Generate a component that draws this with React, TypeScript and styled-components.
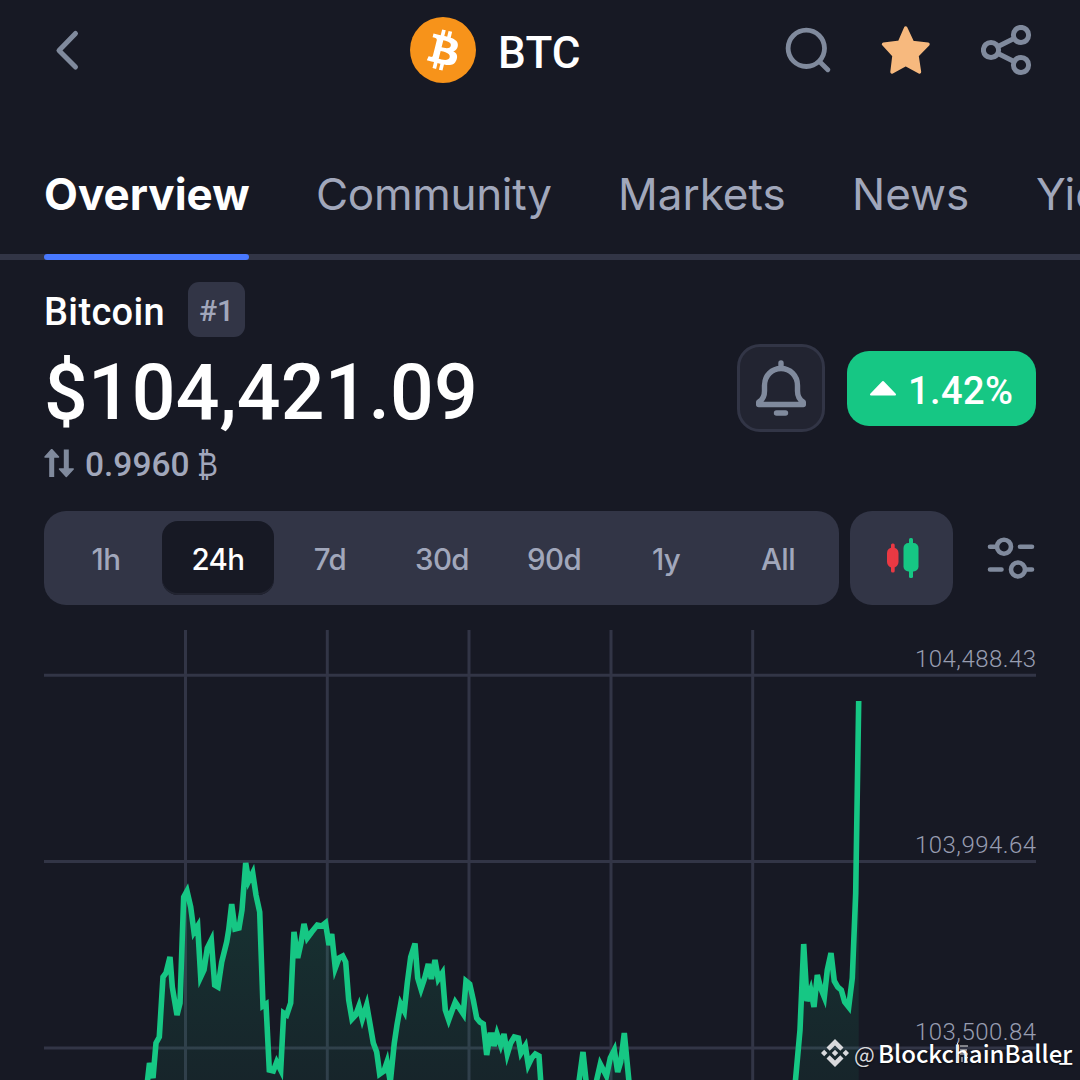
import React from "react";
import styled, { createGlobalStyle } from "styled-components";

const Global = createGlobalStyle`
  * { box-sizing: border-box; }
  html, body { margin: 0; padding: 0; background: #171924; overflow: hidden; }
  button { border: 0; background: none; padding: 0; margin: 0; font: inherit; color: inherit; }
  svg { display: block; }
`;

const Screen = styled.main`
  position: relative;
  width: 1080px;
  height: 1080px;
  overflow: hidden;
  display: flex;
  flex-direction: column;
  background: #171924;
  color: #fff;
  font-family: Roboto, "Liberation Sans", sans-serif;
`;

const Header = styled.header`
  height: 100px;
  flex: none;
  display: grid;
  grid-template-columns: 410px 1fr auto;
  align-items: center;
  padding-right: 48px;
`;

const BackButton = styled.button`
  justify-self: start;
  margin-left: 55px;
`;

const CoinTitle = styled.div`
  display: flex;
  align-items: center;
  gap: 22px;
  font-size: 44px;
  font-weight: 500;
  line-height: 52px;
`;

const Ticker = styled.span`
  padding-top: 6px;
  letter-spacing: 0.2px;
`;

const HeaderActions = styled.div`
  display: flex;
  align-items: center;
  gap: 50px;
`;

const Tabs = styled.nav`
  height: 160px;
  flex: none;
  display: flex;
  gap: 67px;
  padding-left: 44px;
  font-family: Inter, sans-serif;
  font-size: 44px;
  white-space: nowrap;
  box-shadow: inset 0 -6px #323546;
`;

const Tab = styled.button<{ $active?: boolean; $width: number; $spacing?: number }>`
  flex: none;
  width: ${(p) => p.$width}px;
  text-align: left;
  line-height: 54px;
  padding-top: 67px;
  padding-bottom: 32px;
  letter-spacing: ${(p) => p.$spacing ?? 0}px;
  color: ${(p) => (p.$active ? "#fff" : "#a1a7bb")};
  font-weight: ${(p) => (p.$active ? 700 : 400)};
  display: flex;
  flex-direction: column;
  justify-content: space-between;

  &::after {
    content: "";
    width: 100%;
    height: 6px;
    margin-bottom: -32px;
    border-radius: 3px;
    background: ${(p) => (p.$active ? "#4878ff" : "transparent")};
  }
`;

const Summary = styled.section`
  height: 251px;
  flex: none;
  display: flex;
  justify-content: space-between;
  padding: 22px 44px 0;
`;

const Quote = styled.div`
  display: flex;
  flex-direction: column;
`;

const NameRow = styled.div`
  display: flex;
  align-items: center;
  gap: 23px;
  height: 55px;
`;

const CoinName = styled.h1`
  margin: 0;
  padding-top: 4px;
  font-size: 38px;
  font-weight: 500;
  line-height: 46px;
  letter-spacing: 0.35px;
`;

const Rank = styled.span`
  width: 57px;
  height: 55px;
  border-radius: 11px;
  background: #323546;
  color: #a1a7bb;
  font-size: 30px;
  font-weight: 500;
  line-height: 57px;
  text-align: center;
`;

const Price = styled.div`
  margin-top: 10px;
  font-size: 77px;
  font-weight: 500;
  line-height: 92px;
  letter-spacing: 0.12px;
`;

const BtcRow = styled.div`
  display: flex;
  align-items: center;
  gap: 10px;
  margin-top: 4px;
  height: 40px;
  color: #a1a7bb;
  font-size: 33.5px;
  font-weight: 500;
  line-height: 42px;
`;

const BtcValue = styled.span`
  padding-top: 3px;
`;

const BtcSign = styled.span`
  display: inline-block;
  margin-left: -1px;
  font-weight: 400;
  transform: scaleX(0.84);
  transform-origin: left center;
`;

const QuoteActions = styled.div`
  display: flex;
  align-items: center;
  gap: 22px;
  height: 88px;
  margin-top: 62px;
`;

const AlertButton = styled.button`
  display: grid;
  place-items: center;
  width: 88px;
  height: 88px;
  border: 3px solid #323546;
  border-radius: 23px;
  background: #222431;
`;

const Change = styled.div`
  display: flex;
  align-items: center;
  gap: 11px;
  width: 189px;
  height: 75px;
  padding-left: 22px;
  border-radius: 22px;
  background: #16c784;
  font-size: 38px;
  font-weight: 500;
  line-height: 46px;
`;

const ChangeText = styled.span`
  padding-top: 5px;
  letter-spacing: 0.4px;
`;

const Controls = styled.section`
  flex: none;
  display: flex;
  align-items: center;
  padding: 0 45px 0 44px;
  height: 94px;
`;

const RangeGroup = styled.div`
  display: grid;
  grid-template-columns: repeat(7, 112px);
  align-items: start;
  padding: 10px 5px 0 6px;
  width: 795px;
  height: 94px;
  border-radius: 22px;
  background: #323546;
`;

const Range = styled.button<{ $active?: boolean }>`
  height: 74px;
  padding-top: 1px;
  border-radius: 16px;
  text-align: center;
  font-family: Inter, sans-serif;
  font-size: 29.5px;
  font-weight: 450;
  letter-spacing: -0.6px;
  color: ${(p) => (p.$active ? "#fff" : "#a1a7bb")};
  background: ${(p) => (p.$active ? "#171924" : "transparent")};
  box-shadow: ${(p) => (p.$active ? "inset 0 -2px #222431" : "none")};
`;

const CandleButton = styled.button`
  display: grid;
  place-items: center;
  width: 103px;
  height: 94px;
  margin-left: 11px;
  border-radius: 22px;
  background: #323546;
`;

const FilterButton = styled.button`
  margin-left: auto;
`;

const ChartArea = styled.section`
  flex: 1;
  padding-top: 25px;
`;

const Watermark = styled.div`
  position: absolute;
  left: 821px;
  top: 1037px;
  display: flex;
  align-items: center;
  height: 32px;
  font-family: "Noto Sans CJK SC", "Noto Sans", sans-serif;
  font-size: 24px;
  font-weight: 500;
  line-height: 32px;
  white-space: nowrap;
  text-shadow: 0 1px 2px rgba(0, 0, 0, 0.6);
`;

const At = styled.span`
  margin-left: 5px;
  width: 24px;
  font-size: 22px;
  font-weight: 400;
  color: #d9d9dc;
`;

const Underscore = styled.span`
  margin-left: -13px;
  margin-top: -4px;
`;

const Overprint = styled.svg`
  position: absolute;
  left: 135px;
  top: 3px;
`;

const GRAY = "#808a9d";

const series: [number, number][] = [
  [147, 1085], [149.5, 1063], [153, 1078], [156, 1043], [159.3, 1037], [163, 977], [166, 973], [170, 957],
  [172.3, 987], [177, 1015], [180, 1003], [183.7, 897], [187, 891], [190.7, 907], [194, 932], [197.7, 926],
  [200.7, 977], [204, 970], [207.3, 948], [211.3, 940], [214.7, 985], [218, 987], [221.7, 962], [226.7, 942],
  [228.7, 930], [231.7, 904], [235, 929], [239, 928], [242, 910], [245.7, 863], [248.7, 881], [252.7, 873],
  [256, 895], [259.7, 912], [263, 1006], [266, 1004], [269.3, 1070], [273.3, 1071], [276.7, 1062],
  [280.7, 1070], [283.7, 1013], [286.7, 1015], [290.7, 1003], [294, 932], [297.7, 958], [301, 943],
  [304, 924], [307.3, 938], [311.7, 932], [317.3, 925], [321.7, 926], [325.5, 923], [329, 945],
  [331.7, 934], [335.3, 968], [339, 958], [342.7, 956], [345.7, 962], [348.7, 1000], [352, 1019],
  [355.7, 1015], [359, 1006], [362.3, 1019], [366.7, 1005], [370.7, 1028], [373.3, 1043], [376.7, 1052],
  [379.7, 1074], [384, 1071], [387, 1062], [390.3, 1082], [394.3, 1043], [397, 1025], [400.7, 1004],
  [404.3, 1011], [407.3, 983], [410.7, 957], [415, 943.5], [417.7, 978], [421, 989], [425, 977],
  [428.3, 964], [431.3, 979], [435, 960], [438.3, 979], [442.3, 973], [445.3, 1010], [448.7, 1020],
  [452.3, 1010], [455.3, 1002], [459.3, 1008], [463.3, 1014], [466, 981], [469.7, 984], [473.3, 1000],
  [476.7, 1018], [480, 1022], [483.3, 1024], [486.7, 1055], [490, 1035], [492, 1035], [494, 1046], [497, 1034],
  [500.7, 1045], [504, 1034], [507.3, 1054], [510.7, 1043], [514.3, 1037], [518.3, 1038], [521, 1053],
  [525.3, 1046], [528.3, 1065], [531.7, 1058], [535.3, 1054], [539, 1056], [541, 1085], [560, 1150], [578.5, 1085],
  [583, 1052], [586.5, 1085], [592, 1110], [596, 1083], [600.3, 1064], [606.5, 1076], [610.3, 1058], [614.3, 1050],
  [617.7, 1072], [620.7, 1062], [624.3, 1033], [629.3, 1085], [650, 1150], [780, 1150], [795.5, 1080], [800, 1030],
  [803.7, 944], [807, 1001], [810.7, 990], [814, 1007], [817.3, 975], [820.7, 988], [824.3, 997],
  [827.3, 970], [831, 953], [834.3, 981], [837.7, 987], [841.3, 990], [844.7, 1002], [848.7, 1007],
  [852.3, 978], [855.7, 893], [858.7, 701],
];

const line = series.map(([x, y], i) => `${i ? "L" : "M"}${x} ${y}`).join("");
const gridX = [185.5, 327.3, 469, 611, 752.7];
const gridY = [
  { y: 675.3, label: "104,488.43" },
  { y: 861.5, label: "103,994.64" },
  { y: 1048, label: "103,500.84" },
];

function PriceChart() {
  return (
    <svg width="1080" height="450" viewBox="0 630 1080 450">
      <defs>
        <linearGradient id="fill" gradientUnits="userSpaceOnUse" x1="0" y1="701" x2="0" y2="1150">
          <stop offset="0" stopColor="#16c784" stopOpacity="0.22" />
          <stop offset="1" stopColor="#16c784" stopOpacity="0.04" />
        </linearGradient>
      </defs>
      <g stroke="#323546" strokeWidth="3">
        {gridX.map((x) => <path key={x} d={`M${x} 630V1080`} />)}
        {gridY.map(({ y }) => <path key={y} d={`M44 ${y}H1036`} />)}
      </g>
      <path d={`${line}V1150H147Z`} fill="url(#fill)" />
      <path d={line} fill="none" stroke="#16c784" strokeWidth="5.6" strokeMiterlimit="4.4" />
      <g fill="#979db1" fontFamily="Roboto, sans-serif" fontSize="24" fontWeight="340">
        {gridY.map(({ y, label }) => (
          <text key={y} x="915" y={y - 8.3} textLength="121">{label}</text>
        ))}
      </g>
    </svg>
  );
}

function BitcoinLogo() {
  return (
    <svg width="66" height="66" viewBox="0 0 32 32">
      <circle cx="16" cy="16" r="16" fill="#f7931a" />
      <path
        fill="#fff"
        d="M23.189 14.02c.314-2.096-1.283-3.223-3.465-3.975l.708-2.84-1.728-.43-.69 2.765c-.454-.114-.92-.22-1.385-.326l.695-2.783L15.596 6l-.708 2.839c-.376-.086-.746-.17-1.104-.26l.002-.009-2.384-.595-.46 1.846s1.283.294 1.256.312c.7.175.826.638.805 1.006l-.806 3.235c.048.012.11.03.18.057l-.183-.045-1.13 4.532c-.086.212-.303.531-.793.41.018.025-1.256-.313-1.256-.313l-.858 1.978 2.25.561c.418.105.828.215 1.231.318l-.715 2.872 1.727.43.708-2.84c.472.127.93.245 1.378.357l-.706 2.828 1.728.43.715-2.866c2.948.558 5.164.333 6.097-2.333.752-2.146-.037-3.385-1.588-4.192 1.13-.26 1.98-1.003 2.207-2.538zm-3.95 5.538c-.533 2.147-4.148.986-5.32.695l.95-3.805c1.172.293 4.929.872 4.37 3.11zm.535-5.569c-.487 1.953-3.495.96-4.47.717l.86-3.45c.975.243 4.118.696 3.61 2.733z"
      />
    </svg>
  );
}

const ranges = ["1h", "24h", "7d", "30d", "90d", "1y", "All"];

export default function App() {
  return (
    <Screen>
      <Global />
      <Header>
        <BackButton aria-label="Back">
          <svg width="25" height="42" viewBox="0 0 25 42" fill="none" stroke={GRAY} strokeWidth="5" strokeLinecap="round" strokeLinejoin="round">
            <path d="M20.5 4.500L4 21.500L20.500 38" />
          </svg>
        </BackButton>
        <CoinTitle>
          <BitcoinLogo />
          <Ticker>BTC</Ticker>
        </CoinTitle>
        <HeaderActions>
          <svg width="46" height="46" viewBox="785 27 46 46" fill="none" stroke={GRAY} strokeWidth="4.8" strokeLinecap="round">
            <circle cx="806.3" cy="48.3" r="18.2" />
            <path d="M819.500 61.500L827.800 69.700" />
          </svg>
          <svg width="50" height="50" viewBox="881 25 50 50">
            <path
              d="M905.7 28L912.5 42.5L928 44.2L917 55.5L919.5 72L905.7 64.5L892 72L894 55.5L883.5 44.2L899.5 42.2Z"
              fill="#f7b97e" stroke="#f7b97e" strokeWidth="3.4" strokeLinejoin="round"
            />
          </svg>
          <svg width="51" height="51" viewBox="981 25 51 51" fill="none" stroke={GRAY} strokeWidth="5">
            <circle cx="991" cy="50" r="7.6" />
            <circle cx="1021" cy="35" r="7.6" />
            <circle cx="1021" cy="65" r="7.6" />
            <path d="M998 46.5L1014 38.5M998 53.5L1014 61.5" />
          </svg>
        </HeaderActions>
      </Header>

      <Tabs>
        <Tab $active $width={205}>Overview</Tab>
        <Tab $width={235} $spacing={-0.3}>Community</Tab>
        <Tab $width={167}>Markets</Tab>
        <Tab $width={117}>News</Tab>
        <Tab $width={100}>Yield</Tab>
      </Tabs>

      <Summary>
        <Quote>
          <NameRow>
            <CoinName>Bitcoin</CoinName>
            <Rank>#1</Rank>
          </NameRow>
          <Price>$104,421.09</Price>
          <BtcRow>
            <svg width="31" height="29" viewBox="44 449 31 29" fill="none" stroke={GRAY} strokeWidth="5">
              <path d="M51.7 477V455M66.3 449.5V471" />
              <path d="M51.7 449.5L58.5 457H45ZM66.3 476.5L73.2 469H59.5Z" fill={GRAY} strokeWidth="1.5" strokeLinejoin="round" />
            </svg>
            <BtcValue>0.9960 <BtcSign>₿</BtcSign></BtcValue>
          </BtcRow>
        </Quote>
        <QuoteActions>
          <AlertButton aria-label="Price alert">
            <svg width="52" height="58" viewBox="755 359 52 58" fill="none" stroke={GRAY} strokeWidth="5.4" strokeLinecap="round" strokeLinejoin="round">
              <path d="M781 363V368M758.7 404.5H803.3V402C799 399.500 797.500 396 797.500 391V385.500C797.500 375.500 790 368.500 781 368.500S764.500 375.500 764.500 385.500V391C764.500 396 763 399.500 758.700 402Z" />
              <path d="M776.500 413H785.500" />
            </svg>
          </AlertButton>
          <Change>
            <svg width="28" height="18" viewBox="0 0 28 18">
              <path d="M14 3L26 15.500H2Z" fill="#fff" stroke="#fff" strokeWidth="2" strokeLinejoin="round" />
            </svg>
            <ChangeText>1.42%</ChangeText>
          </Change>
        </QuoteActions>
      </Summary>

      <Controls>
        <RangeGroup>
          {ranges.map((r) => <Range key={r} $active={r === "24h"}>{r}</Range>)}
        </RangeGroup>
        <CandleButton aria-label="Candles">
          <svg width="34" height="42" viewBox="885 537 34 42">
            <rect x="887" y="547.500" width="11.500" height="20" rx="5.500" fill="#ea3943" />
            <rect x="891" y="543.500" width="3.700" height="29" rx="1.500" fill="#ea3943" />
            <rect x="903.500" y="543" width="15" height="28.500" rx="5" fill="#16c784" />
            <rect x="909" y="538" width="4" height="40" rx="1.500" fill="#16c784" />
          </svg>
        </CandleButton>
        <FilterButton aria-label="Settings">
          <svg width="48" height="44" viewBox="987 536 48 44" fill="none" stroke={GRAY} strokeWidth="4.600" strokeLinecap="round">
            <circle cx="1004" cy="546.700" r="7" />
            <circle cx="1018" cy="569.500" r="7" />
            <path d="M990 546.700H996M1020 546.700H1032M990 569.500H1001.500M1026 569.500H1032" />
          </svg>
        </FilterButton>
      </Controls>

      <ChartArea>
        <PriceChart />
      </ChartArea>

      <Watermark>
        <svg width="28" height="28" viewBox="0 0 28 28" fill="#d9d9dc">
          <path d="M14 0L22.500 8.500L19.300 11.700L14 6.400L8.700 11.700L5.500 8.500ZM3.200 10.800L6.400 14L3.200 17.200L0 14ZM24.800 10.800L28 14L24.800 17.200L21.600 14ZM14 10.800L17.200 14L14 17.200L10.800 14ZM14 28L5.500 19.500L8.700 16.300L14 21.600L19.300 16.300L22.500 19.500Z" />
        </svg>
        <At>@</At>
        <span>BlockchainBaller</span>
        <Underscore>_</Underscore>
        <Overprint width="14" height="24" viewBox="0 0 14 24" fill="none" stroke="#e8e8ea" strokeWidth="1">
          <path d="M1.500 3V22M4 6H12M4 10H11M4 14H12M6 17V22M9 16L12 18M8 22H12" />
        </Overprint>
      </Watermark>
    </Screen>
  );
}
